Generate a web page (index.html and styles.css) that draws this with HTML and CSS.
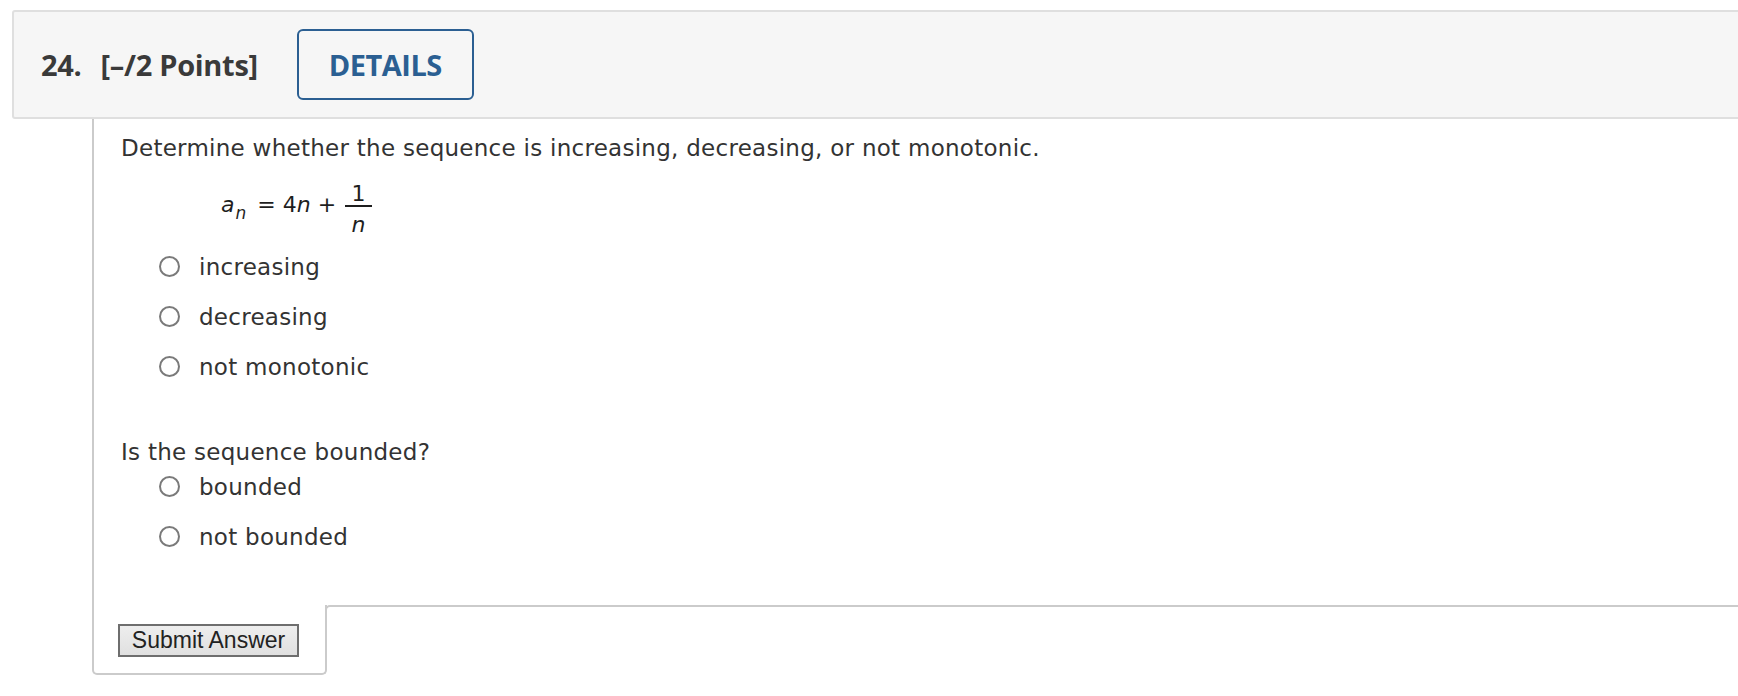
FILE: index.html
```html
<!DOCTYPE html>
<html lang="en">
<head>
<meta charset="utf-8">
<title>Question 24</title>
<link rel="stylesheet" href="styles.css">
</head>
<body>
<div class="page">
  <div class="q-header">
    <span class="q-num">24.</span>
    <span class="q-points">[–/2 Points]</span>
    <button class="details-btn" type="button">DETAILS</button>
  </div>
  <div class="panel">
    <div class="panel-body">
      <p class="q-text">Determine whether the sequence is increasing, decreasing, or not monotonic.</p>
      <div class="equation">
        <span class="mi">a</span><sub class="sub">n</sub><span class="mo eq">=</span><span class="mn">4</span><span class="mi">n</span><span class="mo plus">+</span><span class="frac"><span class="num">1</span><span class="bar"></span><span class="den"><span class="mi">n</span></span></span>
      </div>
      <div class="options first-group">
        <label class="option"><span class="radio"></span><span class="opt-label">increasing</span></label>
        <label class="option"><span class="radio"></span><span class="opt-label">decreasing</span></label>
        <label class="option"><span class="radio"></span><span class="opt-label">not monotonic</span></label>
      </div>
      <p class="q-text second">Is the sequence bounded?</p>
      <div class="options second-group">
        <label class="option"><span class="radio"></span><span class="opt-label">bounded</span></label>
        <label class="option"><span class="radio"></span><span class="opt-label">not bounded</span></label>
      </div>
    </div>
    <div class="panel-foot">
      <div class="tab">
        <button class="submit-btn" type="button">Submit Answer</button>
      </div>
      <div class="rest"></div>
    </div>
  </div>
</div>
</body>
</html>
```

FILE: styles.css
```css
html, body {
  margin: 0;
  padding: 0;
  background: #ffffff;
  overflow: hidden;
}

.page {
  padding: 10px 0 0 12px;
}

.q-header {
  display: flex;
  align-items: center;
  height: 105px;
  margin-right: -20px;
  padding-left: 27px;
  background: #f6f6f6;
  border: 2px solid #dfdfdf;
  border-radius: 3px;
  font-family: "Open Sans", "Noto Sans", sans-serif;
  font-weight: 700;
  color: #3a3a3a;
}

.q-num {
  font-size: 29px;
  letter-spacing: -0.3px;
}

.q-points {
  font-size: 29px;
  letter-spacing: -0.3px;
  margin-left: 19px;
}

.details-btn {
  margin-left: 39px;
  height: 71px;
  width: 177px;
  padding: 0;
  background: transparent;
  border: 2px solid #2b5f92;
  border-radius: 6px;
  font-family: "Open Sans", "Noto Sans", sans-serif;
  font-weight: 700;
  font-size: 29px;
  letter-spacing: -0.5px;
  color: #2b5f92;
}

.panel {
  margin-left: 80px;
  font-family: "DejaVu Sans", Verdana, sans-serif;
  font-size: 23px;
  letter-spacing: 0.27px;
  color: #333333;
}

.panel-body {
  border-left: 2px solid #cbcbcb;
  padding: 13px 0 52px 27px;
}

.q-text {
  margin: 0;
  line-height: 32px;
}

.q-text.second {
  margin-top: 53px;
}

.equation {
  margin: 12px 0 0 100px;
  font-size: 22px;
  line-height: 32px;
  letter-spacing: 0;
  color: #1e1e1e;
}

.mi {
  font-style: italic;
}

.sub {
  font-size: 17px;
  font-style: italic;
  vertical-align: -7px;
  line-height: 0;
  margin-left: 1px;
}

.mo.eq {
  margin: 0 7px 0 11px;
}

.mo.plus {
  margin: 0 9px 0 7px;
}

.frac {
  display: inline-block;
  vertical-align: middle;
  text-align: center;
  width: 27px;
}

.num, .den {
  display: block;
  line-height: 22px;
  padding-top: 7px;
}

.bar {
  display: block;
  height: 2px;
  background: #1e1e1e;
}

.options {
  display: flex;
  flex-direction: column;
  gap: 18px;
  padding-left: 38px;
}

.first-group {
  margin-top: 15px;
}

.second-group {
  margin-top: 3px;
}

.option {
  display: flex;
  align-items: center;
  line-height: 32px;
}

.radio {
  width: 17px;
  height: 17px;
  border: 2px solid #7a7a7a;
  border-radius: 50%;
  margin-top: -2px;
  flex: none;
}

.opt-label {
  margin-left: 19px;
}

.panel-foot {
  display: flex;
  align-items: flex-start;
}

.tab {
  width: 235px;
  box-sizing: border-box;
  border: 2px solid #cbcbcb;
  border-top: none;
  border-radius: 0 0 5px 5px;
  padding: 19px 0 16px 24px;
}

.rest {
  flex: 1;
  height: 8px;
  margin-left: -2px;
  border-top: 2px solid #cbcbcb;
  border-left: 2px solid #cbcbcb;
  border-top-left-radius: 5px;
}

.submit-btn {
  display: block;
  width: 181px;
  height: 33px;
  padding: 0;
  border: 2px solid #6e6e6e;
  border-radius: 0;
  background: linear-gradient(#eeeeee, #e0e0e0);
  font-family: "Liberation Sans", Arial, sans-serif;
  font-size: 23px;
  line-height: 29px;
  letter-spacing: 0;
  color: #222222;
}
```
